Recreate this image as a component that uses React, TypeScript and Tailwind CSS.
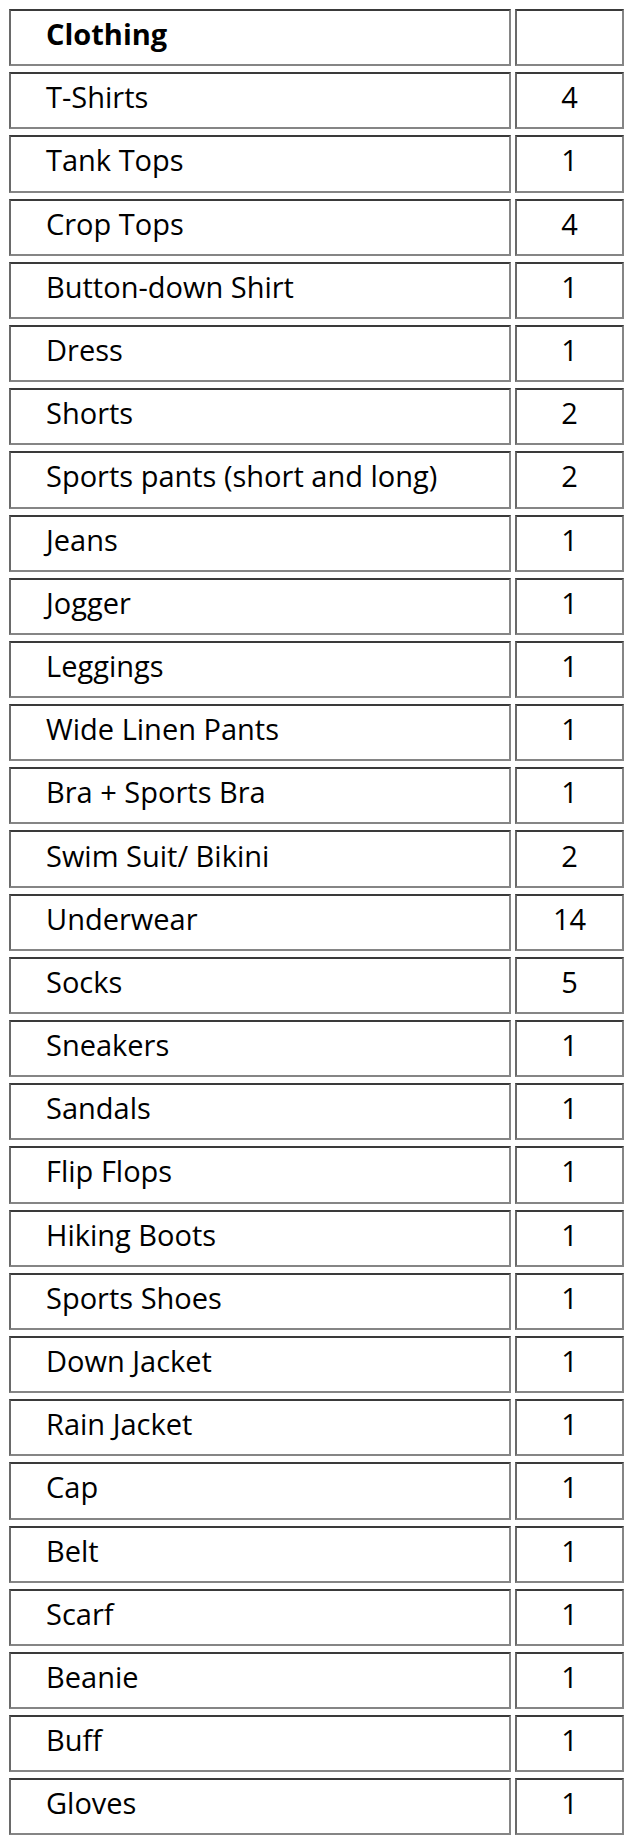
const items: [string, string][] = [
  ["T-Shirts", "4"],
  ["Tank Tops", "1"],
  ["Crop Tops", "4"],
  ["Button-down Shirt", "1"],
  ["Dress", "1"],
  ["Shorts", "2"],
  ["Sports pants (short and long)", "2"],
  ["Jeans", "1"],
  ["Jogger", "1"],
  ["Leggings", "1"],
  ["Wide Linen Pants", "1"],
  ["Bra + Sports Bra", "1"],
  ["Swim Suit/ Bikini", "2"],
  ["Underwear", "14"],
  ["Socks", "5"],
  ["Sneakers", "1"],
  ["Sandals", "1"],
  ["Flip Flops", "1"],
  ["Hiking Boots", "1"],
  ["Sports Shoes", "1"],
  ["Down Jacket", "1"],
  ["Rain Jacket", "1"],
  ["Cap", "1"],
  ["Belt", "1"],
  ["Scarf", "1"],
  ["Beanie", "1"],
  ["Buff", "1"],
  ["Gloves", "1"],
];

const cell =
  "h-[57.2px] pb-[8px] flex items-center border-2 border-[#858585] border-t-[#3a3a3a] border-l-[#6a6a6a]";

export default function App() {
  return (
    <div
      className="bg-white text-black min-h-screen pl-[9px] pt-[9px]"
      style={{ fontFamily: '"Open Sans", "Noto Sans", sans-serif' }}
    >
      <div className="grid grid-cols-[502px_109px] gap-x-[4px] gap-y-[6px] text-[29px] leading-none">
        <div className={cell + " pl-[35px] font-bold"}>Clothing</div>
        <div className={cell}></div>
        {items.map(([name, qty]) => (
          <div key={name} className="contents">
            <div className={cell + " pl-[35px]"}>{name}</div>
            <div className={cell + " justify-center"}>{qty}</div>
          </div>
        ))}
      </div>
    </div>
  );
}
